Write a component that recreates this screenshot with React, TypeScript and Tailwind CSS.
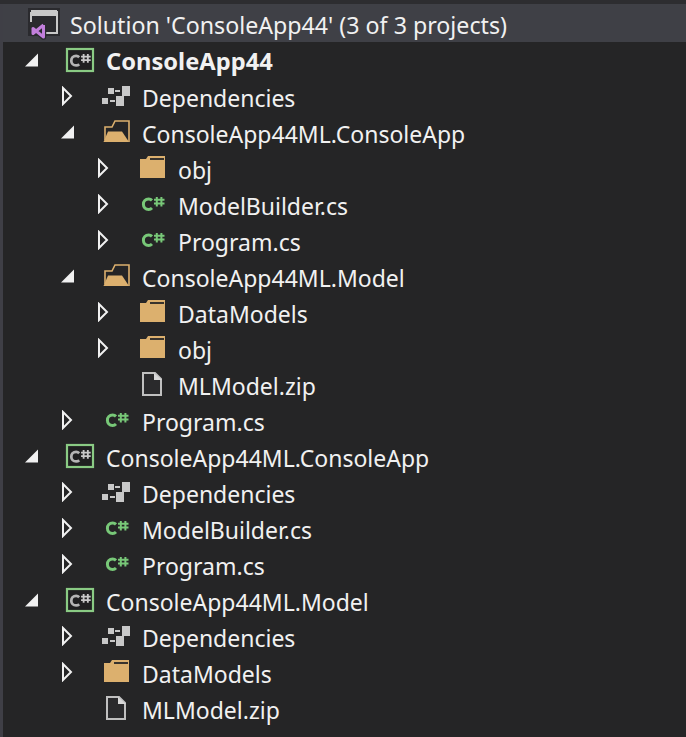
import { ReactNode } from "react";

type IconName = "project" | "deps" | "folder" | "open" | "cs" | "file";
type Row = { level: number; arrow?: "open" | "closed"; icon: IconName; label: string; bold?: boolean };

const rows: Row[] = [
  { level: 0, arrow: "open", icon: "project", label: "ConsoleApp44", bold: true },
  { level: 1, arrow: "closed", icon: "deps", label: "Dependencies" },
  { level: 1, arrow: "open", icon: "open", label: "ConsoleApp44ML.ConsoleApp" },
  { level: 2, arrow: "closed", icon: "folder", label: "obj" },
  { level: 2, arrow: "closed", icon: "cs", label: "ModelBuilder.cs" },
  { level: 2, arrow: "closed", icon: "cs", label: "Program.cs" },
  { level: 1, arrow: "open", icon: "open", label: "ConsoleApp44ML.Model" },
  { level: 2, arrow: "closed", icon: "folder", label: "DataModels" },
  { level: 2, arrow: "closed", icon: "folder", label: "obj" },
  { level: 2, icon: "file", label: "MLModel.zip" },
  { level: 1, arrow: "closed", icon: "cs", label: "Program.cs" },
  { level: 0, arrow: "open", icon: "project", label: "ConsoleApp44ML.ConsoleApp" },
  { level: 1, arrow: "closed", icon: "deps", label: "Dependencies" },
  { level: 1, arrow: "closed", icon: "cs", label: "ModelBuilder.cs" },
  { level: 1, arrow: "closed", icon: "cs", label: "Program.cs" },
  { level: 0, arrow: "open", icon: "project", label: "ConsoleApp44ML.Model" },
  { level: 1, arrow: "closed", icon: "deps", label: "Dependencies" },
  { level: 1, arrow: "closed", icon: "folder", label: "DataModels" },
  { level: 1, icon: "file", label: "MLModel.zip" },
];

function Svg({ children }: { children: ReactNode }) {
  return (
    <svg width="28" height="28" viewBox="0 0 28 28" fill="none" className="block overflow-visible">
      {children}
    </svg>
  );
}

function SharpC({ color, hash, x, y, s = 1 }: { color: string; hash: string; x: number; y: number; s?: number }) {
  return (
    <g transform={`translate(${x} ${y}) scale(${s})`} fill="none">
      <path
        d="M10 2.4C9 1.4 7.9 1 6.7 1 3.4 1 1.4 3.2 1.4 6.2s2 5.2 5.3 5.2c1.2 0 2.3-.4 3.3-1.4"
        stroke={color}
        strokeWidth="3"
      />
      <path d="M14.8-1v9.5M19.4-1v9.5M12 1.8h10.5M12 5.6h10.5" stroke={hash} strokeWidth="2" />
    </g>
  );
}

function Icon({ name }: { name: IconName }) {
  if (name === "project")
    return (
      <Svg>
        <rect x="1" y="3" width="26" height="22" stroke="#8acb84" strokeWidth="2.2" fill="#1f1f20" />
        <SharpC color="#b4b4b4" hash="#c8c8c8" x="4" y="9" s={0.92} />
      </Svg>
    );
  if (name === "cs")
    return (
      <Svg>
        <SharpC color="#78c878" hash="#78c878" x="4" y="8" />
      </Svg>
    );
  if (name === "deps")
    return (
      <Svg>
        <g fill="#c8c8c8">
          <rect x="20" y="4" width="8" height="10" />
          <rect x="6" y="6" width="6" height="6" />
          <rect x="13" y="8" width="5" height="2" />
          <rect x="0" y="16" width="6" height="6" />
          <rect x="8" y="18" width="5" height="2" />
          <rect x="14" y="14" width="8" height="10" />
        </g>
      </Svg>
    );
  if (name === "folder")
    return (
      <Svg>
        <path d="M2 5h6l2-3h17v22H2z" fill="#dcb06e" />
        <path d="M12 5h14" stroke="#252526" strokeWidth="1.8" />
      </Svg>
    );
  if (name === "open")
    return (
      <Svg>
        <path d="M3 22V9h7l3-6h14v21" stroke="#dcb06e" strokeWidth="1.6" />
        <path d="M6 13.5h14L27 24H1.5z" fill="#dcb06e" />
      </Svg>
    );
  return (
    <Svg>
      <path d="M5 3h12l6 6v16H5z" stroke="#c0c0c0" strokeWidth="2" fill="#2a2a2c" />
      <path d="M16 3v7h8z" fill="#d8d8d8" />
    </Svg>
  );
}

function Arrow({ kind }: { kind: "open" | "closed" }) {
  return (
    <svg width="16" height="20" viewBox="0 0 16 20" fill="none" className="block">
      {kind === "open" ? (
        <path d="M1 16.5L14 3.5v13z" fill="#f1f1f1" />
      ) : (
        <path d="M3 2l8 8-8 8z" stroke="#f1f1f1" strokeWidth="2" />
      )}
    </svg>
  );
}

function TreeRow({ row }: { row: Row }) {
  const pad = ["pl-[21px]", "pl-[57px]", "pl-[93px]"][row.level];
  return (
    <div className={`flex h-[36px] items-center ${pad}`}>
      <div className="w-[42px] shrink-0">{row.arrow && <Arrow kind={row.arrow} />}</div>
      <Icon name={row.icon} />
      <span
        className={`ml-[12px] pt-[4px] leading-none text-[#f1f1f1] ${row.bold ? "text-[23.7px] font-bold" : "text-[23px]"}`}
      >
        {row.label}
      </span>
    </div>
  );
}

export default function App() {
  return (
    <div className="h-[737px] w-[686px] overflow-hidden bg-[#252526] font-['Noto_Sans','Open_Sans',sans-serif]">
      <div className="h-[4px] bg-[#2d2d30]" />
      <div className="flex">
        <div className="h-[733px] w-[3px] shrink-0 bg-[#3f3f46]" />
        <div className="min-w-0 flex-1">
          <div className="flex h-[38px] items-center bg-[#3f4046] pl-[27px]">
            <svg width="28" height="28" viewBox="0 0 28 28" fill="none" className="block overflow-visible">
              <rect x="-2" y="-1" width="32" height="28" fill="#2a2a2e" />
              <path d="M1 3v10M1 3h26v21H14" stroke="#c8c8c8" strokeWidth="2" />
              <rect x="1" y="1" width="26" height="6" fill="#c8c8c8" />
              <path d="M13.5 16v12L3 19.5v5L13.5 16" stroke="#2a2a2e" strokeWidth="5.5" strokeLinejoin="round" />
              <path d="M13.5 16v12L3 19.5v5L13.5 16" stroke="#c27fdc" strokeWidth="3" strokeLinejoin="round" />
            </svg>
            <span className="ml-[12px] pt-[5px] text-[23.2px] leading-none text-[#f1f1f1]">
              Solution 'ConsoleApp44' (3 of 3 projects)
            </span>
          </div>
          {rows.map((r, i) => (
            <TreeRow key={i} row={r} />
          ))}
        </div>
      </div>
    </div>
  );
}
